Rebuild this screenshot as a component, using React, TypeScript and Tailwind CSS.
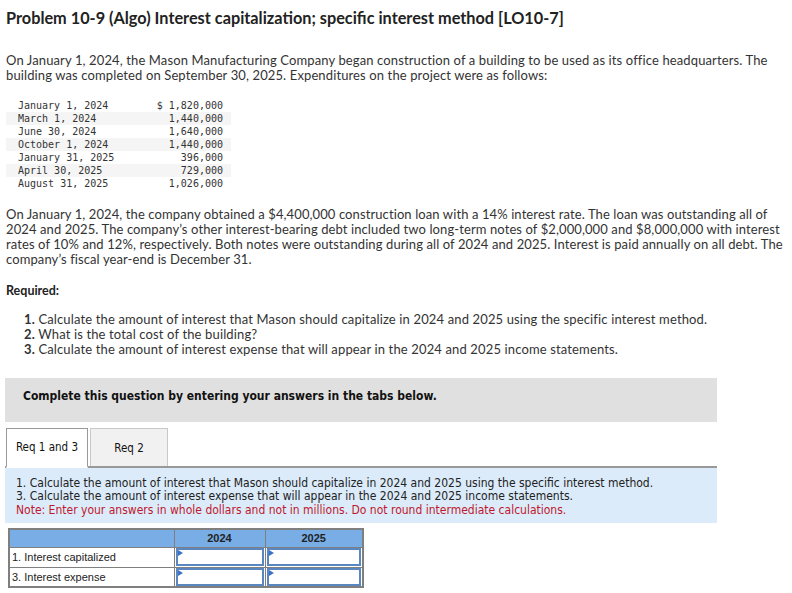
import React from 'react';

const expenditures = [
  ['January 1, 2024', '$ 1,820,000'],
  ['March 1, 2024', '1,440,000'],
  ['June 30, 2024', '1,640,000'],
  ['October 1, 2024', '1,440,000'],
  ['January 31, 2025', '396,000'],
  ['April 30, 2025', '729,000'],
  ['August 31, 2025', '1,026,000'],
];

const InputCell = () => (
  <td className="border border-[#7f7f7f] p-0 h-[20px]">
    <div className="relative h-[18px] mx-[1px] border-2 border-[#5b87c0] bg-white">
      <span className="absolute left-0 top-0 w-0 h-0 border-t-[3px] border-b-[3px] border-l-[5px] border-t-transparent border-b-transparent border-l-[#3b73c4]" />
    </div>
  </td>
);

export default function App() {
  return (
    <div className="w-[792px] h-[593px] bg-white text-[#333] font-['Lato',sans-serif] px-[6px] overflow-hidden">
      {/* Title */}
      <h1 className="pt-[9px] text-[16.3px] font-bold text-[#222] leading-[18px] whitespace-nowrap">
        Problem 10-9 (Algo) Interest capitalization; specific interest method [LO10-7]
      </h1>

      {/* Intro */}
      <p className="mt-[26px] text-[13px] leading-[15px] tracking-[0.12px] whitespace-nowrap">
        On January 1, 2024, the Mason Manufacturing Company began construction of a building to be used as its office headquarters. The
        <br />
        building was completed on September 30, 2025. Expenditures on the project were as follows:
      </p>

      {/* Expenditures */}
      <table className="mt-[16px] font-['DejaVu_Sans_Mono',monospace] text-[10px] leading-[13px] text-[#333] border-collapse">
        <tbody>
          {expenditures.map(([d, a], i) => (
            <tr key={d} className={i % 2 === 1 ? 'bg-[#f5f5f5]' : ''}>
              <td className="pl-[12px] w-[150px] whitespace-pre">{d}</td>
              <td className="text-right pr-[8px] w-[75px] whitespace-pre">{a}</td>
            </tr>
          ))}
        </tbody>
      </table>

      {/* Loan paragraph */}
      <p className="mt-[17px] text-[13px] leading-[15px] tracking-[0.1px] whitespace-nowrap">
        On January 1, 2024, the company obtained a $4,400,000 construction loan with a 14% interest rate. The loan was outstanding all of
        <br />
        2024 and 2025. The company’s other interest-bearing debt included two long-term notes of $2,000,000 and $8,000,000 with interest
        <br />
        rates of 10% and 12%, respectively. Both notes were outstanding during all of 2024 and 2025. Interest is paid annually on all debt. The
        <br />
        company’s fiscal year-end is December 31.
      </p>

      <p className="mt-[15px] text-[12.5px] font-bold text-[#222]">Required:</p>

      <ol className="mt-[11px] pl-[18px] text-[13px] leading-[15px] tracking-[0.14px] whitespace-nowrap">
        <li><b>1.</b> Calculate the amount of interest that Mason should capitalize in 2024 and 2025 using the specific interest method.</li>
        <li><b>2.</b> What is the total cost of the building?</li>
        <li><b>3.</b> Calculate the amount of interest expense that will appear in the 2024 and 2025 income statements.</li>
      </ol>

      {/* Instructions box */}
      <div className="mt-[21px] w-[712px] -ml-[1px] h-[44px] bg-[#e0e0e0] pt-[10px] pl-[18px] font-['DejaVu_Sans_Condensed',Tahoma,sans-serif] text-[12px] leading-[16px] font-bold text-[#111]">
        Complete this question by entering your answers in the tabs below.
      </div>

      {/* Tabs */}
      <div className="mt-[6px] w-[712px] -ml-[1px] flex items-end border-b-2 border-[#999] font-['DejaVu_Sans_Condensed',Tahoma,sans-serif] text-[11.5px] text-[#111]">
        <div className="w-[82px] h-[40px] -mb-[2px] ml-[1px] pt-[1px] bg-white border border-[#999] border-b-white border-b-2 flex items-center justify-center">
          Req 1 and 3
        </div>
        <div className="w-[78px] h-[38px] ml-[2px] pt-[2px] bg-[#f1f1f1] border border-[#c8c8c8] border-b-0 flex items-center justify-center">
          Req 2
        </div>
      </div>

      <div className="w-[712px] -ml-[1px] bg-[#dbebf9] pt-[9px] pb-[6px] pl-[11px] font-['DejaVu_Sans_Condensed',Tahoma,sans-serif] text-[12px] leading-[13.5px] text-[#222]">
        <p>1. Calculate the amount of interest that Mason should capitalize in 2024 and 2025 using the specific interest method.</p>
        <p>3. Calculate the amount of interest expense that will appear in the 2024 and 2025 income statements.</p>
        <p className="text-[#c0172d]">Note: Enter your answers in whole dollars and not in millions. Do not round intermediate calculations.</p>
      </div>

      {/* Answer table */}
      <table className="mt-[5px] ml-[2px] border-collapse border-2 border-[#7f7f7f] font-['Liberation_Sans',Arial,sans-serif] text-[11px] text-[#222]">
        <thead>
          <tr className="bg-[#79ade5] h-[18px]">
            <th className="w-[165px] border border-[#7f7f7f]"></th>
            <th className="w-[91px] border border-[#7f7f7f] font-bold text-center">2024</th>
            <th className="w-[98px] border border-[#7f7f7f] font-bold text-center">2025</th>
          </tr>
        </thead>
        <tbody>
          <tr>
            <td className="border border-[#7f7f7f] pl-[2px] h-[20px]">1. Interest capitalized</td>
            <InputCell />
            <InputCell />
          </tr>
          <tr>
            <td className="border border-[#7f7f7f] pl-[2px] h-[20px]">3. Interest expense</td>
            <InputCell />
            <InputCell />
          </tr>
        </tbody>
      </table>
    </div>
  );
}
